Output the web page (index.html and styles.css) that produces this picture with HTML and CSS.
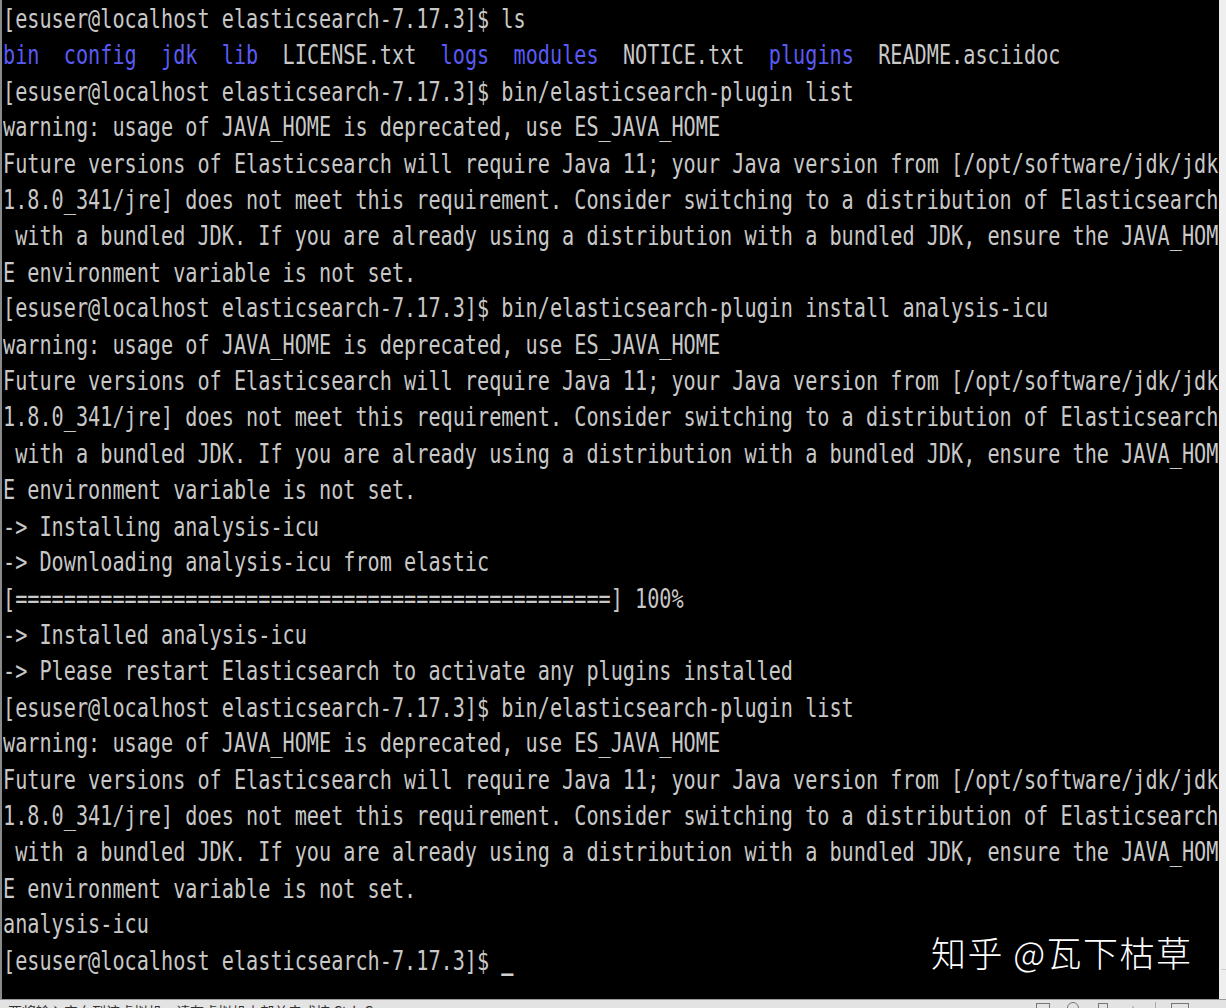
FILE: index.html
```html
<!DOCTYPE html>
<html lang="zh">
<head>
<meta charset="utf-8">
<title>Terminal</title>
<link rel="stylesheet" href="styles.css">
</head>
<body>
<div class="window">
  <div class="row">
    <div class="screen">
      <pre class="term"><span class="ln">[esuser@localhost elasticsearch-7.17.3]$ ls</span>
<span class="ln"><span class="dir">bin</span>  <span class="dir">config</span>  <span class="dir">jdk</span>  <span class="dir">lib</span>  LICENSE.txt  <span class="dir">logs</span>  <span class="dir">modules</span>  NOTICE.txt  <span class="dir">plugins</span>  README.asciidoc</span>
<span class="ln">[esuser@localhost elasticsearch-7.17.3]$ bin/elasticsearch-plugin list</span>
<span class="ln">warning: usage of JAVA_HOME is deprecated, use ES_JAVA_HOME</span>
<span class="ln">Future versions of Elasticsearch will require Java 11; your Java version from [/opt/software/jdk/jdk</span>
<span class="ln">1.8.0_341/jre] does not meet this requirement. Consider switching to a distribution of Elasticsearch</span>
<span class="ln"> with a bundled JDK. If you are already using a distribution with a bundled JDK, ensure the JAVA_HOM</span>
<span class="ln">E environment variable is not set.</span>
<span class="ln">[esuser@localhost elasticsearch-7.17.3]$ bin/elasticsearch-plugin install analysis-icu</span>
<span class="ln">warning: usage of JAVA_HOME is deprecated, use ES_JAVA_HOME</span>
<span class="ln">Future versions of Elasticsearch will require Java 11; your Java version from [/opt/software/jdk/jdk</span>
<span class="ln">1.8.0_341/jre] does not meet this requirement. Consider switching to a distribution of Elasticsearch</span>
<span class="ln"> with a bundled JDK. If you are already using a distribution with a bundled JDK, ensure the JAVA_HOM</span>
<span class="ln">E environment variable is not set.</span>
<span class="ln">-&gt; Installing analysis-icu</span>
<span class="ln">-&gt; Downloading analysis-icu from elastic</span>
<span class="ln">[=================================================] 100%</span>
<span class="ln">-&gt; Installed analysis-icu</span>
<span class="ln">-&gt; Please restart Elasticsearch to activate any plugins installed</span>
<span class="ln">[esuser@localhost elasticsearch-7.17.3]$ bin/elasticsearch-plugin list</span>
<span class="ln">warning: usage of JAVA_HOME is deprecated, use ES_JAVA_HOME</span>
<span class="ln">Future versions of Elasticsearch will require Java 11; your Java version from [/opt/software/jdk/jdk</span>
<span class="ln">1.8.0_341/jre] does not meet this requirement. Consider switching to a distribution of Elasticsearch</span>
<span class="ln"> with a bundled JDK. If you are already using a distribution with a bundled JDK, ensure the JAVA_HOM</span>
<span class="ln">E environment variable is not set.</span>
<span class="ln">analysis-icu</span>
<span class="ln">[esuser@localhost elasticsearch-7.17.3]$ <span class="cursor">_</span></span></pre>
      <div class="watermark">知乎 @瓦下枯草</div>
    </div>
    <div class="scrollbar"><span class="grip"></span></div>
  </div>
  <div class="statusbar">
    <span class="status-text">要将输入定向到该虚拟机，请在虚拟机内部单击或按 Ctrl+G。</span>
    <div class="devices">
      <svg class="dev" width="16" height="12" viewBox="0 0 16 12"><rect x="1.5" y="3.5" width="13" height="7" fill="none" stroke="#777"/></svg>
      <svg class="dev" width="16" height="12" viewBox="0 0 16 12"><circle cx="8" cy="8" r="5.5" fill="none" stroke="#777"/></svg>
      <svg class="dev" width="16" height="12" viewBox="0 0 16 12"><rect x="3.5" y="3.5" width="9" height="8" fill="none" stroke="#777"/></svg>
      <svg class="dev" width="16" height="12" viewBox="0 0 16 12"><path d="M8 6v6" stroke="#999"/></svg>
      <span class="sep"></span>
      <svg class="dev" width="20" height="12" viewBox="0 0 20 12"><rect x="1.5" y="3.5" width="17" height="8" fill="none" stroke="#777"/></svg>
    </div>
  </div>
</div>
</body>
</html>
```

FILE: styles.css
```css
html, body {
  margin: 0;
  padding: 0;
  background: #eeeeee;
  overflow: hidden;
}

.window {
  width: 1226px;
  height: 1008px;
  display: flex;
  flex-direction: column;
}

.row {
  display: flex;
  height: 999px;
}

.screen {
  position: relative;
  width: 1217px;
  height: 999px;
  background: #000;
  border-left: 2px solid #8a8a8a;
  overflow: hidden;
}

.term {
  margin: 0;
  padding: 1px 0 0 1px;
  font-family: "DejaVu Sans Mono", "Liberation Mono", monospace;
  font-size: 20.2px;
  line-height: 28.4px;
  color: #c8c8c8;
  white-space: pre;
  transform: scaleY(1.275);
  transform-origin: 0 0;
}

.dir {
  color: #5a5af4;
}

.cursor {
  color: #d0d0d0;
  font-weight: bold;
}

.watermark {
  position: absolute;
  left: 929px;
  top: 934px;
  font-family: "Noto Sans CJK SC", "Noto Sans", sans-serif;
  font-size: 35px;
  font-weight: 300;
  letter-spacing: 1.5px;
  line-height: 1;
  color: #ffffff;
  white-space: nowrap;
}

.scrollbar {
  position: relative;
  flex: 1;
  background: #efefef;
}

.grip {
  position: absolute;
  left: 2px;
  top: 969px;
  width: 5px;
  height: 1px;
  background: #cfcfcf;
}

.statusbar {
  height: 8px;
  border-top: 1px solid #9a9a9a;
  background: #e3e3e3;
  display: flex;
  justify-content: space-between;
  overflow: hidden;
}

.status-text {
  padding: 2px 0 0 8px;
  font-family: "Noto Sans CJK SC", sans-serif;
  font-size: 14px;
  line-height: 18px;
  color: #333;
  white-space: nowrap;
}

.devices {
  display: flex;
  align-items: flex-start;
  gap: 14px;
  padding-right: 36px;
}

.dev {
  display: block;
}

.sep {
  width: 1px;
  height: 10px;
  margin-top: 2px;
  background: #aaa;
}
```
